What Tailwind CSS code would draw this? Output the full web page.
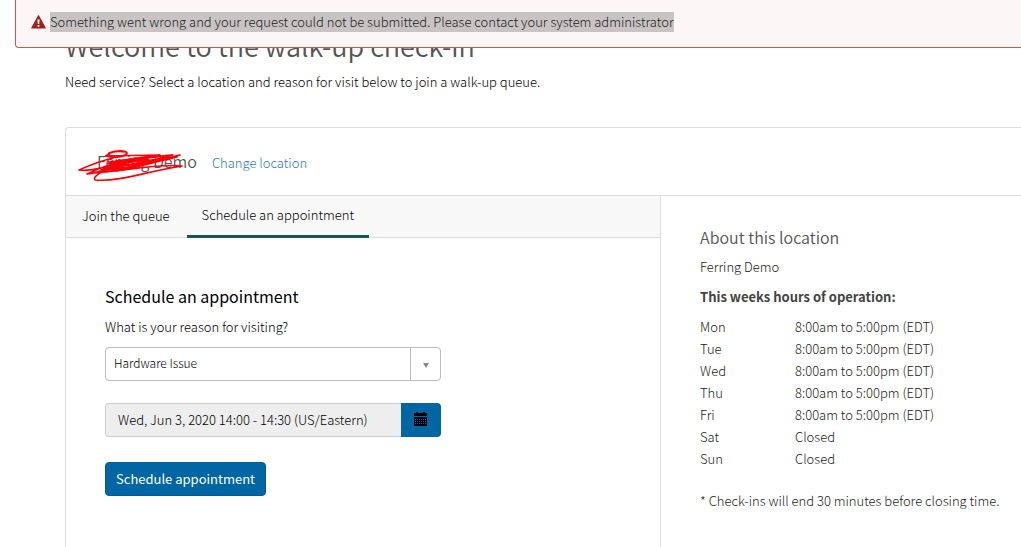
<!DOCTYPE html>
<html lang="en">
<head>
    <meta charset="utf-8">
    <meta name="viewport" content="width=device-width, initial-scale=1">
    <title>Walk-up check-in</title>
    <script src="https://cdn.jsdelivr.net/npm/@tailwindcss/browser@4"></script>
</head>
<body class="min-h-screen flex flex-col overflow-hidden bg-white font-['Noto_Sans_CJK_SC',sans-serif] font-light text-[13px] leading-5 text-black">
    <!-- error banner, floats over the page -->
    <div role="alert" class="absolute top-0 left-[15px] right-0 z-10 h-12 flex items-start gap-1 pt-3 pl-[15px] bg-[#fdf6f6] border-l border-b border-[#d9534f] rounded-bl text-[#222]">
        <svg class="w-[15px] h-[14px] mt-[3px]" viewBox="0 0 15 14">
            <path d="M7.5 .8 L14.2 13 H.8 Z" fill="#a3201d" stroke="#a3201d" stroke-width="1.2" stroke-linejoin="round"/>
            <path d="M6.4 4.5 h2.2 l-.4 4.5 h-1.4 Z M6.6 10 h1.8 v1.8 h-1.8 Z" fill="#fdf6f6"/>
        </svg>
        <span class="bg-[#c8c4c4]">Something went wrong and your request could not be submitted. Please contact your system administrator</span>
    </div>

    <header class="pl-[65px] pt-7">
        <h1 class="text-[27px] leading-9 font-[350] text-[#555]">Welcome to the walk-up check-in</h1>
        <p class="mt-2">Need service? Select a location and reason for visit below to join a walk-up queue.</p>
    </header>

    <main class="ml-[65px] mt-[35px] flex-1 flex flex-col border-l border-t border-[#dcdcdc] rounded-tl">
        <div class="relative flex items-baseline h-[67px] pt-[23px] pl-[31px] gap-[15px]">
            <h2 class="text-base leading-5 font-[350] text-[#555]">Ferring Demo</h2>
            <a href="#" class="text-[#2f78bd]">Change location</a>
            <svg class="absolute left-3 top-5 w-[108px] h-[36px]" viewBox="0 0 108 36" fill="none" stroke="#fb0007" stroke-width="1.7" stroke-linecap="round" stroke-linejoin="round">
                <path d="M29 7 C34 3 42 3 48 4 C52 6 44 9 38 9 C33 9 30 7 31 5 C38 2 48 2 49 5 C46 10 33 10 28 8"/>
                <path d="M35 10 C26 12 10 18 1 22 C16 24 36 16 58 10 C44 12 26 18 9 26 C26 24 44 16 68 9 C52 14 34 18 26 24 C45 23 66 13 92 8 C74 14 54 15 32 21 C52 22 78 12 102 7 C84 13 61 17 38 23 C50 22 76 14 99 9"/>
                <path d="M28 8 L82 7 C64 9 48 12 30 14 C55 16 73 7 95 7 C78 9 54 10 30 18 C48 20 70 12 92 10 C70 13 40 13 23 22 L60 18"/>
                <path d="M32 20 C23 24 14 29 17 32 C42 34 70 23 104 18 C82 15 50 23 12 25"/>
            </svg>
        </div>

        <div class="flex-1 grid grid-cols-[595fr_360fr] border-t border-[#dcdcdc]">
            <section class="border-r border-[#dcdcdc]">
                <nav class="flex h-[42px] bg-[#f8f8f8] border-b border-[#dcdcdc]">
                    <a href="#" class="px-4 pt-2.5">Join the queue</a>
                    <a href="#" class="ml-px px-[15px] pt-[9px] h-[42px] border-b-3 border-[#14594f]">Schedule an appointment</a>
                </nav>

                <form class="pl-[39px] pt-12">
                    <h3 class="text-base leading-5 font-normal">Schedule an appointment</h3>
                    <label for="reason" class="block mt-[11px]">What is your reason for visiting?</label>
                    <div class="relative mt-2.5 w-[336px]">
                        <select id="reason" class="appearance-none block w-full h-[34px] pl-2 pr-9 pb-0.5 text-[12px] bg-white border border-[#b9bcc3] rounded">
                            <option>Hardware Issue</option>
                        </select>
                        <span class="absolute right-0 inset-y-0 w-[31px] flex items-center justify-center border-l border-[#b9bcc3] pointer-events-none">
                            <svg class="w-1.5 h-[5px] mt-0.5" viewBox="0 0 6 5"><path d="M0 0 H6 L3 5 Z" fill="#888"/></svg>
                        </span>
                    </div>

                    <div class="flex mt-[22px] w-[336px]">
                        <input type="text" readonly aria-label="Appointment time" value="Wed, Jun 3, 2020 14:00 - 14:30 (US/Eastern)" class="flex-1 min-w-0 h-[34px] px-3 pb-0.5 bg-[#eee] border border-r-0 border-[#ccc] rounded-l">
                        <button type="button" aria-label="Pick a time" class="w-10 h-[34px] flex items-center justify-center pr-0.5 pb-0.5 bg-[#0066a3] rounded-r">
                            <svg class="w-[13px] h-[14px]" viewBox="0 0 13 14">
                                <path d="M0 1 H2 V0 H4 V1 H9 V0 H11 V1 H13 V4 H0 Z M0 5 H13 V14 H0 Z" fill="#000"/>
                                <path d="M1 7.5 H12 M1 9.5 H12 M1 11.5 H12" stroke="#0066a3" stroke-width="1" stroke-dasharray="1 1"/>
                            </svg>
                        </button>
                    </div>

                    <button type="button" class="mt-[25px] h-[34px] px-2.5 bg-[#0066a3] border border-[#005a91] rounded font-normal text-white">Schedule appointment</button>
                </form>
            </section>

            <aside class="pl-[39px] pt-[31px] text-[#222]">
                <h3 class="text-base leading-5 font-[350] text-[#555]">About this location</h3>
                <p class="mt-2.5">Ferring Demo</p>
                <p class="mt-2.5 font-bold text-[#444]">This weeks hours of operation:</p>
                <table class="mt-[9px] leading-[22px] text-left">
                    <tr><th class="w-[95px] font-light">Mon</th><td>8:00am to 5:00pm (EDT)</td></tr>
                    <tr><th class="font-light">Tue</th><td>8:00am to 5:00pm (EDT)</td></tr>
                    <tr><th class="font-light">Wed</th><td>8:00am to 5:00pm (EDT)</td></tr>
                    <tr><th class="font-light">Thu</th><td>8:00am to 5:00pm (EDT)</td></tr>
                    <tr><th class="font-light">Fri</th><td>8:00am to 5:00pm (EDT)</td></tr>
                    <tr><th class="font-light">Sat</th><td>Closed</td></tr>
                    <tr><th class="font-light">Sun</th><td>Closed</td></tr>
                </table>
                <p class="mt-[21px]">* Check-ins will end 30 minutes before closing time.</p>
            </aside>
        </div>
    </main>
</body>
</html>
